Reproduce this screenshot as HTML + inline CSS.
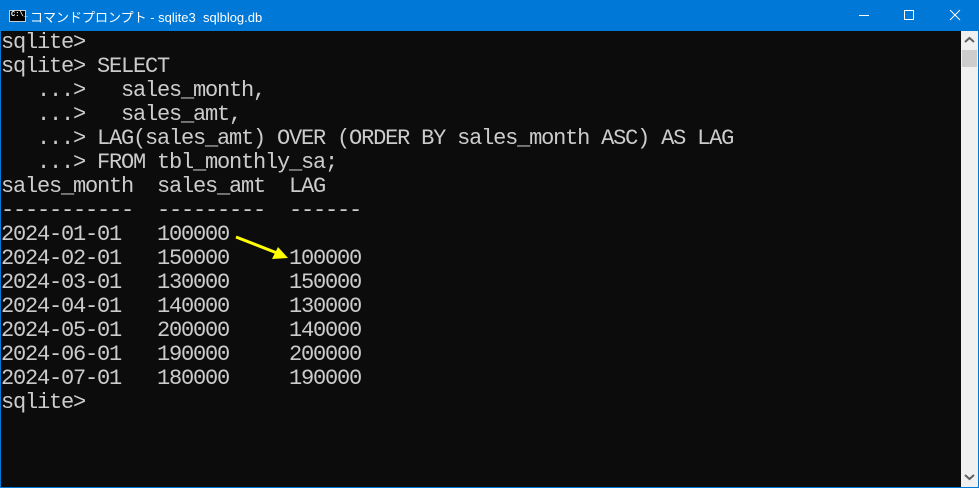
<!DOCTYPE html>
<html><head><meta charset="utf-8"><style>
html,body{margin:0;padding:0;width:979px;height:488px;overflow:hidden;background:#0078d7;}
#title{position:absolute;left:0;top:0;width:979px;height:31px;background:#0078d7;color:#fff;font:13px "Liberation Sans","Noto Sans CJK JP",sans-serif;}
#title .t{position:absolute;left:30px;top:7px;}
#ico{position:absolute;left:9px;top:10px;width:15px;height:10px;background:#000;border:1px solid #ccc;}
#ico span{position:absolute;left:1px;top:0px;color:#fff;font:bold 7px "Liberation Mono",monospace;line-height:9px;}
#con{position:absolute;left:1px;top:31px;width:960px;height:456px;background:#0c0c0c;}
pre{margin:0;position:absolute;left:0px;top:0px;color:#cccccc;font:22px "Liberation Mono","Noto Sans CJK JP",monospace;line-height:24px;letter-spacing:-1.2px;}
#sb{position:absolute;left:961px;top:31px;width:17px;height:456px;background:#f0f0f0;}
#thumb{position:absolute;left:1px;top:19px;width:15px;height:17px;background:#cdcdcd;}
</style></head><body>
<div id="title"><div id="ico"><span>C:\_</span></div><div class="t">コマンドプロンプト - sqlite3&nbsp; sqlblog.db</div>
<svg style="position:absolute;left:850px;top:0" width="129" height="31">
<line x1="9" y1="15.5" x2="19" y2="15.5" stroke="#fff" stroke-width="1"/>
<rect x="54.5" y="10.5" width="9" height="9" fill="none" stroke="#fff"/>
<line x1="100" y1="10" x2="110" y2="20" stroke="#fff"/><line x1="110" y1="10" x2="100" y2="20" stroke="#fff"/>
</svg></div>
<div id="con"><pre>sqlite&gt;
sqlite&gt; SELECT
   ...&gt;   sales_month,
   ...&gt;   sales_amt,
   ...&gt; LAG(sales_amt) OVER (ORDER BY sales_month ASC) AS LAG
   ...&gt; FROM tbl_monthly_sa;
sales_month  sales_amt  LAG
-----------  ---------  ------
2024-01-01   100000
2024-02-01   150000     100000
2024-03-01   130000     150000
2024-04-01   140000     130000
2024-05-01   200000     140000
2024-06-01   190000     200000
2024-07-01   180000     190000
sqlite&gt;</pre>
<svg style="position:absolute;left:0;top:0" width="960" height="456">
<line x1="235" y1="206" x2="276" y2="222" stroke="#ffff00" stroke-width="3"/>
<polygon points="287,227 271,228 277,216" fill="#ffff00"/>
</svg></div>
<div id="sb"><div id="thumb"></div>
<svg style="position:absolute;left:0;top:0" width="17" height="456">
<polyline points="4,11 8.5,7 13,11" fill="none" stroke="#606060" stroke-width="2"/>
<polyline points="4,444 8.5,448 13,444" fill="none" stroke="#606060" stroke-width="2"/>
</svg></div>
</body></html>
